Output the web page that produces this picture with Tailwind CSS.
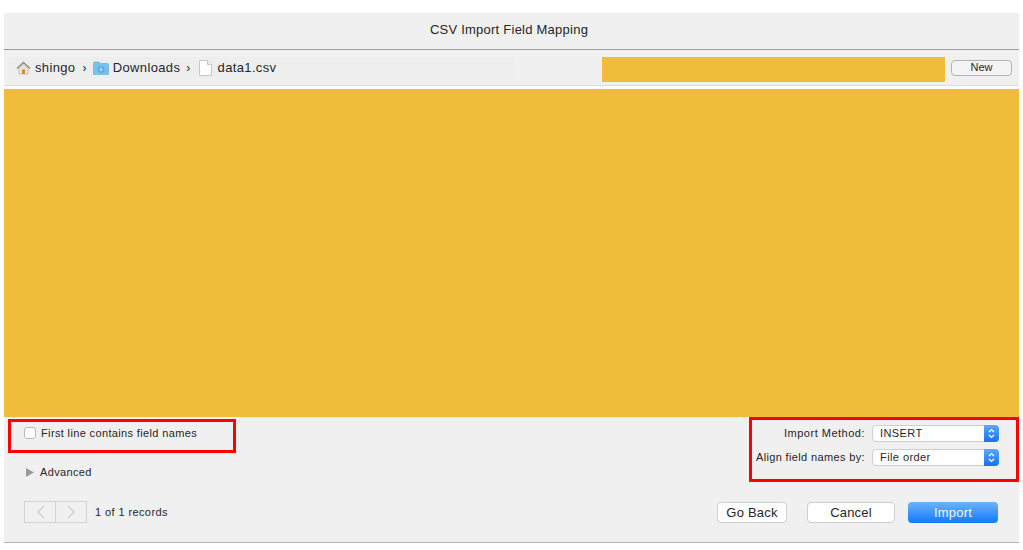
<!DOCTYPE html>
<html>
<head>
<meta charset="utf-8">
<script src="https://cdn.jsdelivr.net/npm/@tailwindcss/browser@4"></script>
</head>
<body class="bg-white font-['Liberation_Sans',sans-serif] text-[#262626]">
<div class="w-[1023px] h-[550px] pt-[13px] pl-[4px] pr-[4px] overflow-hidden">
  <div class="w-[1015px] h-[530px] bg-[#f0f0f0] flex flex-col border-b border-[#b5b5b5]">
    <div class="h-[37px] shrink-0 flex items-center justify-center border-b border-[#989898] text-[13px] tracking-[.24px] pr-[5px] pb-[2px]">CSV Import Field Mapping</div>
    <div class="h-[36px] shrink-0 flex items-center border-b border-[#dcdcdc]">
      <div class="w-[507px] h-[21px] ml-[4px] bg-[#eeeeee] flex items-center pl-[8px] text-[13px] tracking-[.35px]">
        <svg class="w-[15px] h-[14px]" viewBox="0 0 15 14"><path d="M1 7.5 7.5 1.5 14 7.5" fill="none" stroke="#8f8a80" stroke-width="1.4"/><path d="M3 7.5 7.5 3.5 12 7.5V13H3Z" fill="#ece6da" stroke="#b0aa9e" stroke-width=".6"/><path d="M6 8.5h3V13H6Z" fill="#e58a1f"/></svg>
        <span class="ml-[4px]">shingo</span>
        <span class="ml-[7px] text-[12px]">›</span>
        <svg class="ml-[6px] w-[16px] h-[14px]" viewBox="0 0 16 14"><path d="M.5 2.5A1 1 0 0 1 1.5 1H6l1.2 1.5h7.3a1 1 0 0 1 1 1V13a.6.6 0 0 1-.6.6H1a.6.6 0 0 1-.6-.6Z" fill="#74c3ef" stroke="#58a9d8" stroke-width=".6"/><circle cx="8" cy="8.5" r="3.4" fill="#5aaee0"/><path d="M8 6.3v3.4M6.6 8.4 8 10l1.4-1.6" fill="none" stroke="#d8f0fc" stroke-width=".9"/></svg>
        <span class="ml-[4px]">Downloads</span>
        <span class="ml-[6px] text-[12px]">›</span>
        <svg class="ml-[8px] w-[13px] h-[16px]" viewBox="0 0 13 16"><path d="M.5.5H8.5L12.5 4.5V15.5H.5Z" fill="#fff" stroke="#c6c6c6"/><path d="M8.5.5V4.5H12.5" fill="#f0f0f0" stroke="#c6c6c6"/></svg>
        <span class="ml-[6px]">data1.csv</span>
      </div>
      <div class="w-[343px] h-[25px] ml-[87px] mt-[3px] bg-[#f0bd3a]"></div>
      <button class="w-[61px] h-[16px] ml-[6px] bg-[#f4f4f4] rounded-[4px] border border-[#b4b4b4] text-[11px] leading-none">New</button>
    </div>
    <div class="h-[3px] shrink-0 bg-white"></div>
    <div class="h-[328px] shrink-0 bg-[#f0bd3a]"></div>
    <div class="flex-1 flex justify-between">
      <div class="flex flex-col">
        <div class="w-[228px] h-[34px] ml-[4px] mt-[2px] border-[3px] border-[#ff0000] flex items-center pl-[13px] pb-[6px] text-[11px] tracking-[.36px]">
          <span class="w-[12px] h-[12px] bg-white rounded-[3px] border border-[#b9b9b9]"></span>
          <span class="ml-[5px]">First line contains field names</span>
        </div>
        <div class="flex items-center ml-[22px] mt-[11px] text-[11px] tracking-[.36px]">
          <svg class="w-[8px] h-[9px] mt-[1px]" viewBox="0 0 8 9"><path d="M0 0 8 4.5 0 9Z" fill="#9a9a9a"/></svg>
          <span class="ml-[6px]">Advanced</span>
        </div>
        <div class="flex items-center ml-[20px] mt-[20px]">
          <div class="flex w-[63px] h-[22px] border border-[#d4d4d4] bg-[#f0f0f0]">
            <span class="w-[31px] flex items-center justify-center border-r border-[#d4d4d4]"><svg class="w-[9px] h-[14px]" viewBox="0 0 9 14"><path d="M8 1 2 7 8 13" fill="none" stroke="#cfcfcf" stroke-width="1.4"/></svg></span>
            <span class="flex-1 flex items-center justify-center"><svg class="w-[9px] h-[14px]" viewBox="0 0 9 14"><path d="M1 1 7 7 1 13" fill="none" stroke="#cfcfcf" stroke-width="1.4"/></svg></span>
          </div>
          <span class="ml-[8px] mt-[1px] text-[11px] tracking-[.4px]">1 of 1 records</span>
        </div>
      </div>
      <div class="flex flex-col items-end">
        <div class="w-[270px] h-[65px] border-[3px] border-[#ff0000] flex flex-col gap-[6px] pt-[4px] text-[11px] tracking-[.42px]">
          <div class="flex items-center justify-end pr-[17px] h-[18px]">
            <span class="tracking-[.5px]">Import Method:</span>
            <div class="ml-[7px] w-[127px] h-[17px] bg-white rounded-[4px] border border-[#cfcfcf] flex items-center justify-between pl-[7px]">INSERT
              <span class="w-[15px] h-[17px] -mr-px rounded-r-[4px] bg-[linear-gradient(#5aa9fb,#1872ee)] flex items-center justify-center"><svg class="w-[7px] h-[11px]" viewBox="0 0 7 11"><path d="M1 4 3.5 1.5 6 4M1 7 3.5 9.5 6 7" fill="none" stroke="#fff" stroke-width="1.2"/></svg></span>
            </div>
          </div>
          <div class="flex items-center justify-end pr-[17px] h-[18px]">
            <span class="tracking-[.36px]">Align field names by:</span>
            <div class="ml-[7px] w-[127px] h-[17px] bg-white rounded-[4px] border border-[#cfcfcf] flex items-center justify-between pl-[7px]">File order
              <span class="w-[15px] h-[17px] -mr-px rounded-r-[4px] bg-[linear-gradient(#5aa9fb,#1872ee)] flex items-center justify-center"><svg class="w-[7px] h-[11px]" viewBox="0 0 7 11"><path d="M1 4 3.5 1.5 6 4M1 7 3.5 9.5 6 7" fill="none" stroke="#fff" stroke-width="1.2"/></svg></span>
            </div>
          </div>
        </div>
        <div class="flex items-center mt-[20px] mr-[21px] text-[13px] tracking-[.2px]">
          <button class="w-[70px] h-[21px] bg-white rounded-[4px] border border-[#cdcdcd] leading-none">Go Back</button>
          <button class="ml-[20px] w-[88px] h-[21px] bg-white rounded-[4px] border border-[#cdcdcd] leading-none">Cancel</button>
          <button class="ml-[13px] w-[90px] h-[21px] rounded-[4px] bg-[linear-gradient(#6db3fb,#0f7bfb)] text-[#eef5ff] leading-none">Import</button>
        </div>
      </div>
    </div>
  </div>
</div>
</body>
</html>
